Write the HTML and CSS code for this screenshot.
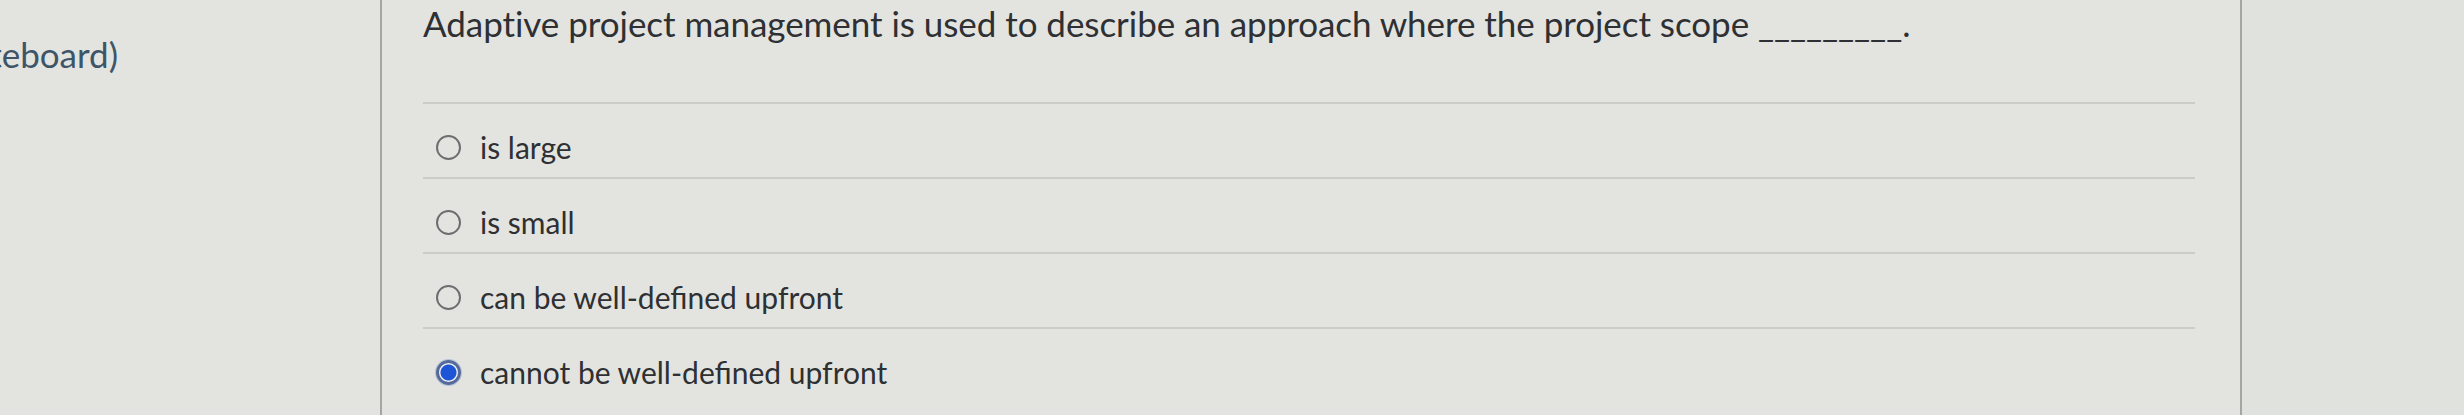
FILE: index.html
```html
<!DOCTYPE html>
<html lang="en">
<head>
<meta charset="UTF-8">
<meta name="viewport" content="width=device-width, initial-scale=1.0">
<title>Quiz question</title>
<link rel="stylesheet" href="styles.css">
</head>
<body>

<div class="page">
  <aside class="sidebar">
    <div class="crumb"><span>Whiteboard)</span></div>
  </aside>

  <main class="quiz">
    <div class="question">
      <p class="question-text">Adaptive project management is used to describe an approach where the project scope <span class="blank">_________</span>.</p>
      <div class="answers">
        <label class="answer"><input type="radio" name="answer"><span>is large</span></label>
        <label class="answer"><input type="radio" name="answer"><span>is small</span></label>
        <label class="answer"><input type="radio" name="answer"><span>can be well-defined upfront</span></label>
        <label class="answer"><input type="radio" name="answer" checked><span>cannot be well-defined upfront</span></label>
      </div>
    </div>
  </main>

  <aside class="gutter"></aside>
</div>

</body>
</html>
```

FILE: styles.css
```css
body {
  margin: 0;
  padding: 0;
  background-color: #e3e4e0;
  color: #2e3033;
  font-family: Lato, "Liberation Sans", sans-serif;
}

.page {
  display: flex;
  height: 100vh;
  overflow: hidden;
}

.sidebar {
  flex: 0 0 380px;
  border-right: 2px solid #a4a6a4;
  overflow: hidden;
}

/* breadcrumb is cut off on the left, so push it out from the right edge */
.crumb {
  display: flex;
  justify-content: flex-end;
  width: 118px;
  margin-top: 33px;
  font-size: 35px;
  line-height: 42px;
  color: #3e5568;
  white-space: nowrap;
}

.quiz {
  flex: 0 0 1772px;
  padding: 0 45px 0 41px;
  border-right: 2px solid #a4a6a4;
}

.gutter {
  flex: 1;
  background-color: #e0e2de;
}

.question-text {
  margin: 0;
  padding: 2px 0 58px 0;
  font-size: 35px;
  line-height: 42px;
  letter-spacing: -0.05px;
}

.answer {
  display: flex;
  align-items: center;
  gap: 19px;
  padding: 28px 0 15px 13px;
  border-top: 2px solid #cbccc8;
  font-size: 30px;
  line-height: 30px;
}

.answer input {
  appearance: none;
  -webkit-appearance: none;
  margin: 0;
  width: 25px;
  height: 25px;
  border: 2px solid #6c6e70;
  border-radius: 50%;
  background-color: transparent;
  box-sizing: border-box;
}

.answer input:checked {
  border: 3px solid #55699a;
  background: radial-gradient(circle, #1e55d6 0 7.5px, #f1f3f4 8.5px);
  box-shadow: 0 0 0 1px rgba(120, 150, 210, 0.45);
}
```
